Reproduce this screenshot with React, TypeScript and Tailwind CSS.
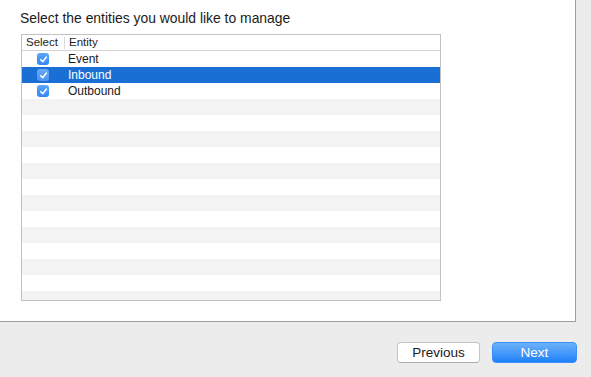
import React from "react";

const rows = [
  { name: "Event", checked: true },
  { name: "Inbound", checked: true, selected: true },
  { name: "Outbound", checked: true },
];

function Check({ selected }: { selected?: boolean }) {
  return (
    <div
      className={
        "w-[12px] h-[12px] rounded-[3px] flex items-center justify-center " +
        (selected
          ? "bg-gradient-to-b from-[#6aaaf6] to-[#4a93f2]"
          : "bg-gradient-to-b from-[#5aa8fb] to-[#2f86f6]")
      }
    >
      <svg width="9" height="9" viewBox="0 0 9 9">
        <path d="M1.8 4.8 L3.7 6.7 L7.3 2.2" fill="none" stroke="white" strokeWidth="1.6" strokeLinecap="round" strokeLinejoin="round" />
      </svg>
    </div>
  );
}

export default function App() {
  const all = Array.from({ length: 16 }, (_, i) => rows[i] ?? { name: "", checked: false });
  return (
    <div
      className="w-[591px] h-[377px] bg-[#ececec] flex flex-col overflow-hidden"
      style={{ fontFamily: '"Liberation Sans", Arial, sans-serif' }}
    >
      <div className="w-[576px] h-[322px] bg-white border-r border-b border-[#9d9d9d] flex flex-col">
        <div className="pl-[20px] pt-[10px] h-[34px] text-[13.9px] leading-[16px] text-[#1a1a1a]">
          Select the entities you would like to manage
        </div>
        <div className="ml-[21px] w-[420px] h-[267px] border border-[#c2c2c2] flex flex-col overflow-hidden">
          <div className="h-[16px] shrink-0 border-b border-[#d4d4d4] flex items-center text-[11.5px] leading-[15px] text-[#1e1e1e]">
            <div className="w-[42px] pl-[4px]">Select</div>
            <div className="w-px h-[12px] bg-[#dcdcdc]" />
            <div className="pl-[4px]">Entity</div>
          </div>
          {all.map((r, i) => (
            <div
              key={i}
              className={
                "h-[16px] shrink-0 flex items-center text-[12px] leading-[16px] " +
                (r.selected
                  ? "bg-[#1a6fd5] text-white"
                  : i % 2 === 1
                  ? "bg-[#f3f3f3] text-[#1a1a1a]"
                  : "bg-white text-[#1a1a1a]")
              }
            >
              <div className="w-[46px] pl-[15px] flex items-center">
                {r.checked && <Check selected={r.selected} />}
              </div>
              <div>{r.name}</div>
            </div>
          ))}
        </div>
      </div>
      <div className="flex justify-end items-start gap-[12px] pr-[14px] pt-[20px]">
        <button className="w-[83px] h-[21px] rounded-[4px] bg-white border border-[#c4c4c4] border-b-[#adadad] text-[13.5px] leading-[19px] text-[#1a1a1a] flex items-center justify-center">
          Previous
        </button>
        <button className="w-[85px] h-[21px] rounded-[4px] bg-gradient-to-b from-[#6bb2fa] to-[#1b80f9] border border-[#3d8ff5] text-[13.5px] leading-[19px] text-white flex items-center justify-center">
          Next
        </button>
      </div>
    </div>
  );
}
